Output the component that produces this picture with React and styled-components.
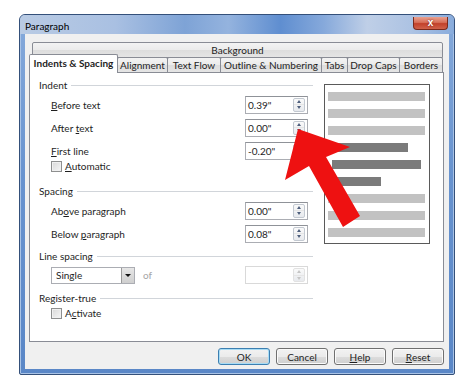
import React from 'react'
import styled, { createGlobalStyle } from 'styled-components'

const GlobalStyle = createGlobalStyle`
  body {
    margin: 0;
    background: #fff;
    font-family: Lato, "Liberation Sans", sans-serif;
    font-size: 10px;
    color: #1e1e1e;
  }
`

const Stage = styled.div`
  position: relative;
  width: 474px;
  height: 390px;
  padding: 14px 0 0 19px;
  box-sizing: border-box;
`

const Window = styled.div`
  width: 436px;
  height: 361px;
  box-sizing: border-box;
  border: 1px solid #34507a;
  border-radius: 6px 6px 2px 2px;
  padding: 0 5px 5px;
  display: flex;
  flex-direction: column;
  background: linear-gradient(180deg, #86aadb 0%, #6893cf 45%, #5a87c7 100%);
  box-shadow: inset 0 0 0 1px #a9c3e6;
`

const TitleBar = styled.div`
  height: 19px;
  margin: 0 -5px;
  padding: 0 6px 0 5px;
  display: flex;
  align-items: center;
  justify-content: space-between;
  border-radius: 5px 5px 0 0;
  background: linear-gradient(90deg, #b9cbe4 0%, #a9c0e2 22%, #7ea3d6 38%, #94b3de 48%, #5f8ed0 60%, #86a9db 70%, #bfcfe7 80%, #adc3e3 90%, #89acdc 100%);
`

const Title = styled.span`
  font-size: 10px;
  color: #000;
  margin-top: 2px;
`

const CloseButton = styled.div`
  width: 35px;
  height: 13px;
  margin-top: -3px;
  box-sizing: border-box;
  border: 1px solid #7a2a1c;
  border-top: none;
  border-radius: 0 0 4px 4px;
  background: linear-gradient(180deg, #e9a08f 0%, #d76f58 45%, #c2412a 55%, #d0624a 100%);
  display: flex;
  align-items: center;
  justify-content: center;
  color: #fff;
  font: bold 10px "Liberation Sans", sans-serif;
  text-shadow: 0 0 2px #6b1a10;
`

const Client = styled.div`
  flex: 1;
  background: #f0f0f0;
  padding: 8px 5px 0 4px;
  display: flex;
  flex-direction: column;
`

const BackRow = styled.div`
  height: 13px;
  margin: 0 1px 0 3px;
  display: flex;
`

const FrontRow = styled.div`
  height: 18px;
  margin-bottom: -1px;
  display: flex;
  align-items: flex-end;
  position: relative;
  z-index: 1;
`

const Tab = styled.div`
  box-sizing: border-box;
  width: ${p => p.$w}px;
  height: ${p => (p.$active ? 19 : 16)}px;
  flex: ${p => (p.$grow ? 1 : 'none')};
  border: 1px solid #898c95;
  border-bottom: ${p => (p.$active ? 'none' : '1px solid #898c95')};
  margin-left: -1px;
  border-radius: 2px 2px 0 0;
  background: ${p => (p.$active ? '#fff' : 'linear-gradient(180deg, #f3f3f3 0%, #ebebeb 50%, #dddddd 51%, #e5e5e5 100%)')};
  display: flex;
  align-items: center;
  justify-content: center;
  font-weight: ${p => (p.$active ? 700 : 400)};
  white-space: nowrap;
  padding-bottom: ${p => (p.$active ? 2 : 0)}px;
  &:first-child {
    margin-left: 0;
  }
`

const Panel = styled.div`
  height: 270px;
  box-sizing: border-box;
  border: 1px solid #898c95;
  background: #fff;
  padding: 4px 0 0 9px;
  display: flex;
`

const FormColumn = styled.div`
  width: 274px;
  display: flex;
  flex-direction: column;
`

const Header = styled.div`
  height: 16px;
  margin-top: ${p => p.$mt || 0}px;
  display: flex;
  align-items: center;
  gap: 4px;
  &::after {
    content: '';
    flex: 1;
    height: 1px;
    background: #d1d5da;
  }
`

const FieldRow = styled.div`
  display: grid;
  grid-template-columns: 194px 63px;
  align-items: center;
  height: ${p => p.$h || 23}px;
  margin-top: ${p => p.$mt || 0}px;
  padding-left: 12px;
`

const Inline = styled.div`
  display: flex;
  align-items: center;
  gap: 8px;
`

const U = styled.span`
  text-decoration: underline;
`

const SpinBox = styled.div`
  height: 18px;
  box-sizing: border-box;
  border: 1px solid ${p => (p.$disabled ? '#d9d9d9' : '#abadb3')};
  border-top-color: ${p => (p.$disabled ? '#d9d9d9' : '#8f9298')};
  background: #fff;
  display: flex;
  align-items: center;
  justify-content: space-between;
  padding: 0 1px 0 2px;
`

const Spinner = styled.div`
  width: 12px;
  height: 14px;
  box-sizing: border-box;
  border: 1px solid ${p => (p.$disabled ? '#e2e2e2' : '#c3c9d1')};
  border-radius: 2px;
  background: linear-gradient(180deg, #fafafa, #e8eaee);
  display: flex;
  flex-direction: column;
  margin-right: 1px;
`

const SpinHalf = styled.div`
  flex: 1;
  display: flex;
  align-items: center;
  justify-content: center;
  & + & {
    border-top: 1px solid ${p => (p.$disabled ? '#e6e6e6' : '#d3d7dd')};
  }
  &::before {
    content: '';
    border-left: 2.5px solid transparent;
    border-right: 2.5px solid transparent;
    ${p => (p.$down ? 'border-top' : 'border-bottom')}: 3px solid ${p => (p.$disabled ? '#c5c5c5' : '#4e5f7d')};
  }
`

const Select = styled.div`
  width: 84px;
  height: 17px;
  box-sizing: border-box;
  border: 1px solid #abadb3;
  background: #fff;
  display: flex;
  align-items: center;
  justify-content: space-between;
  padding-left: 4px;
`

const DropButton = styled.div`
  width: 13px;
  height: 15px;
  box-sizing: border-box;
  border-left: 1px solid #9a9a9a;
  background: linear-gradient(180deg, #e6e6e6, #cfcfcf);
  display: flex;
  align-items: center;
  justify-content: center;
  &::before {
    content: '';
    border-left: 3px solid transparent;
    border-right: 3px solid transparent;
    border-top: 3px solid #111;
  }
`

const Muted = styled.span`
  color: #a5a5a5;
`

const CheckRow = styled.div`
  height: 12px;
  margin-top: ${p => p.$mt || 0}px;
  padding-left: 12px;
  display: flex;
  align-items: center;
  gap: 3px;
`

const CheckBox = styled.span`
  width: 11px;
  height: 11px;
  box-sizing: border-box;
  border: 1px solid #8e8f8f;
  background: linear-gradient(135deg, #d8d8d8, #f6f6f6);
  box-shadow: inset 0 0 0 1px #f0f0f0;
`

const Preview = styled.div`
  width: 106px;
  height: 160px;
  box-sizing: border-box;
  margin: 7px 0 0 11px;
  border: 1px solid #5a5a5a;
  padding: 7px 4px 0 3px;
  display: flex;
  flex-direction: column;
  gap: 8px;
`

const Bar = styled.div`
  height: 9px;
  margin-left: ${p => p.$indent || 0}px;
  width: ${p => p.$w || 97}px;
  background: ${p => (p.$dark ? '#7b7b7b' : '#c2c2c2')};
`

const ButtonBar = styled.div`
  margin-top: 6px;
  display: flex;
  justify-content: flex-end;
  gap: 6px;
`

const Button = styled.div`
  width: 52px;
  height: 17px;
  box-sizing: border-box;
  border: 1px solid ${p => (p.$default ? '#3c7fb1' : '#707070')};
  border-radius: 3px;
  background: linear-gradient(180deg, #f2f2f2 0%, #ebebeb 50%, #dddddd 51%, #cfcfcf 100%);
  box-shadow: inset 0 0 0 1px ${p => (p.$default ? '#a8dcf5' : '#fbfbfb')};
  display: flex;
  align-items: center;
  justify-content: center;
`

const Arrow = styled.svg`
  position: absolute;
  left: 0;
  top: 0;
  pointer-events: none;
`

const tabs = [
  ['Indents & Spacing', 89, true],
  ['Alignment', 51],
  ['Text Flow', 54],
  ['Outline & Numbering', 102],
  ['Tabs', 27],
  ['Drop Caps', 53],
  ['Borders', 44],
]

const Spin = ({ value, disabled }) => (
  <SpinBox $disabled={disabled}>
    <span>{value}</span>
    <Spinner $disabled={disabled}>
      <SpinHalf $disabled={disabled} />
      <SpinHalf $disabled={disabled} $down />
    </Spinner>
  </SpinBox>
)

export default function App() {
  return (
    <Stage>
      <GlobalStyle />
      <Window>
        <TitleBar>
          <Title>Paragraph</Title>
          <CloseButton>x</CloseButton>
        </TitleBar>
        <Client>
          <BackRow>
            <Tab $grow>Background</Tab>
          </BackRow>
          <FrontRow>
            {tabs.map(([label, w, active]) => (
              <Tab key={label} $w={w} $active={active}>{label}</Tab>
            ))}
          </FrontRow>
          <Panel>
            <FormColumn>
              <Header>Indent</Header>
              <FieldRow>
                <span><U>B</U>efore text</span>
                <Spin value={'0.39"'} />
              </FieldRow>
              <FieldRow>
                <span>After <U>t</U>ext</span>
                <Spin value={'0.00"'} />
              </FieldRow>
              <FieldRow>
                <span><U>F</U>irst line</span>
                <Spin value={'-0.20"'} />
              </FieldRow>
              <CheckRow $mt={-2}>
                <CheckBox />
                <span><U>A</U>utomatic</span>
              </CheckRow>

              <Header $mt={11}>Spacing</Header>
              <FieldRow>
                <span>Ab<U>o</U>ve paragraph</span>
                <Spin value={'0.00"'} />
              </FieldRow>
              <FieldRow>
                <span>Below <U>p</U>aragraph</span>
                <Spin value={'0.08"'} />
              </FieldRow>

              <Header $mt={3}>Line spacing</Header>
              <FieldRow $h={18} $mt={2}>
                <Inline>
                  <Select>
                    <span>Single</span>
                    <DropButton />
                  </Select>
                  <Muted>of</Muted>
                </Inline>
                <Spin value="" disabled />
              </FieldRow>

              <Header $mt={6}>Register-true</Header>
              <CheckRow $mt={1}>
                <CheckBox />
                <span>A<U>c</U>tivate</span>
              </CheckRow>
            </FormColumn>

            <Preview>
              <Bar />
              <Bar />
              <Bar />
              <Bar $dark $indent={2} $w={78} />
              <Bar $dark $indent={4} $w={89} />
              <Bar $dark $indent={4} $w={49} />
              <Bar />
              <Bar />
              <Bar />
            </Preview>
          </Panel>
          <ButtonBar>
            <Button $default>OK</Button>
            <Button>Cancel</Button>
            <Button><U>H</U>elp</Button>
            <Button><U>R</U>eset</Button>
          </ButtonBar>
        </Client>
      </Window>
      <Arrow width="474" height="390" viewBox="0 0 474 390">
        <polygon
          points="298,129 350,147 326,157 360,216 343,227 309,166 285,180"
          fill="#ee1111"
        />
      </Arrow>
    </Stage>
  )
}
